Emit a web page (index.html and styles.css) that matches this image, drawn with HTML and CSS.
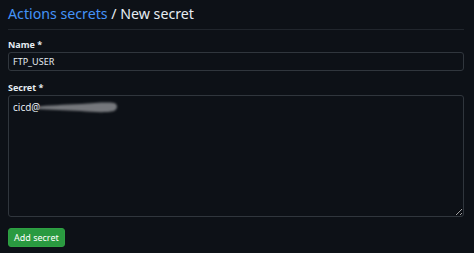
FILE: index.html
```html
<!DOCTYPE html>
<html lang="en">
<head>
<meta charset="utf-8">
<link rel="stylesheet" href="styles.css">
</head>
<body>
<main class="page">
  <h1 class="title"><a class="crumb" href="#">Actions secrets</a> / New secret</h1>
  <form class="form">
    <label class="label" for="name">Name *</label>
    <input class="input" id="name" type="text" value="FTP_USER">
    <label class="label label-secret" for="secret">Secret *</label>
    <div class="area-wrap">
      <textarea class="area" id="secret">cicd@</textarea>
      <svg class="smudge" width="84" height="16" viewBox="0 0 84 16" aria-hidden="true">
        <defs><filter id="b" x="-10%" y="-40%" width="120%" height="180%"><feGaussianBlur stdDeviation="0.9"/></filter></defs>
        <path d="M2 8 C12 6 30 6 46 5 C60 4 72 3 79 4 C83 5 83 10 79 12 C70 14 58 13 46 12 C32 11 14 11 3 10 Z" fill="#75777b" filter="url(#b)"/>
      </svg>
    </div>
    <button class="btn" type="button">Add secret</button>
  </form>
</main>
</body>
</html>
```
FILE: styles.css
```css
html, body {
  margin: 0;
  background: #0d1117;
}
body {
  font-family: "Noto Sans", "Open Sans", sans-serif;
  color: #e6edf3;
}
.page {
  padding: 0 10px 0 8px;
}
.title {
  margin: 0;
  padding: 4px 0 6px;
  font-size: 14.2px;
  line-height: 19px;
  font-weight: 400;
  color: #e6edf3;
  border-bottom: 1px solid #21262d;
}
.crumb {
  color: #4493f8;
  text-decoration: none;
}
.form {
  display: flex;
  flex-direction: column;
  align-items: flex-start;
  padding-top: 9px;
}
.label {
  font-size: 9px;
  line-height: 12px;
  font-weight: 700;
  margin-bottom: 1px;
}
.label-secret {
  margin-top: 11px;
}
.input {
  box-sizing: border-box;
  width: 100%;
  height: 19px;
  margin: 0;
  padding: 0 4px;
  background: #0d1117;
  border: 1px solid #30363d;
  border-radius: 3px;
  color: #e6edf3;
  font-family: inherit;
  font-size: 9px;
  outline: none;
}
.area-wrap {
  position: relative;
  width: 100%;
  height: 122px;
}
.area {
  box-sizing: border-box;
  display: block;
  width: 100%;
  height: 122px;
  margin: 0;
  padding: 5px 4px;
  background: #0d1117;
  border: 1px solid #30363d;
  border-radius: 3px;
  color: #e6edf3;
  font-family: inherit;
  font-size: 10px;
  line-height: 13px;
  color-scheme: dark;
  resize: vertical;
  outline: none;
}
.smudge {
  position: absolute;
  left: 27px;
  top: 4px;
}
.btn {
  margin-top: 11px;
  height: 19px;
  padding: 0 5px;
  background: #2a9a40;
  border: 1px solid #2ea043;
  border-radius: 3px;
  color: #ffffff;
  font-family: inherit;
  font-size: 9px;
  line-height: 17px;
}
```
